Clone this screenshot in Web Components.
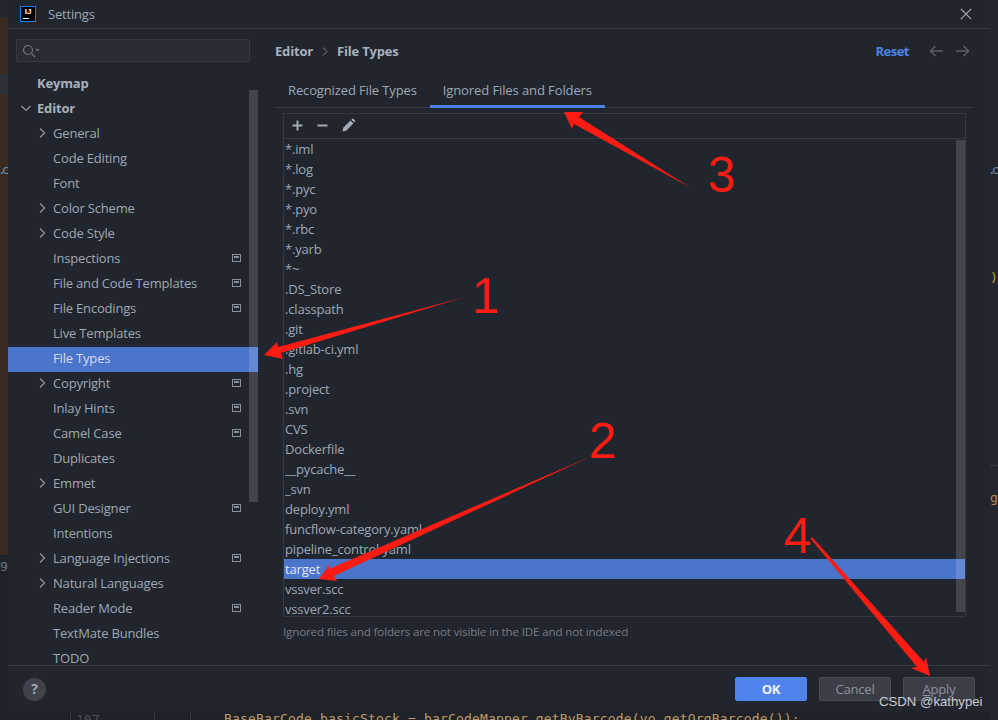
<!DOCTYPE html>
<html>
<head>
<meta charset="utf-8">
<title>Settings</title>
<style>
	html, body {
		margin: 0;
		height: 720px;
		overflow: hidden;
		background: #1f2229;
	}
	body {
		position: relative;
		font: 13px "Open Sans", "Noto Sans", sans-serif;
		color: #9fa8b5;
	}
</style>
</head>
<body>
<ide-backdrop></ide-backdrop>
<settings-dialog></settings-dialog>
<red-notes></red-notes>
<script>
class IdeBackdrop extends HTMLElement {
	constructor(){
		super();
		this.attachShadow({mode:"open"});
		this.shadowRoot.innerHTML = `
			<style>
				:host {
					display: block;
					position: absolute;
					inset: 0;
					background: #1f2229;
					overflow: hidden;
				}
				div, span { position: absolute; }
				#top { left: 0; top: 0; width: 8px; height: 17px; background: #23262d; }
				#brown { left: 0; top: 17px; width: 8px; height: 538px; background: #392b22; }
				#sel { left: 0; top: 74px; width: 8px; height: 21px; background: #2e3138; }
				#right { left: 990px; top: 0; width: 8px; height: 720px; background: #23262d; }
				#rule { left: 990px; top: 465px; width: 8px; height: 1px; background: #353840; }
				.mono { font: 13px/16px "DejaVu Sans Mono", monospace; white-space: pre; }
				.tight { letter-spacing: -4px; }
				#code { left: 224px; top: 711px; color: #c39a62; letter-spacing: .17px; }
				#num { left: 76px; top: 712px; color: #4a4e56; }
				.line { top: 712px; width: 1px; height: 8px; background: #353840; }
			</style>
			<div id="top"></div>
			<div id="brown"></div>
			<div id="sel"></div>
			<div id="right"></div>
			<div id="rule"></div>
			<span class="mono tight" style="left:-2px;top:162px;color:#6d8aa8">.c</span>
			<span class="mono" style="left:0;top:559px;color:#6f737a">9</span>
			<span class="mono tight" style="left:988px;top:162px;color:#6d8aa8">.c</span>
			<span class="mono" style="left:990px;top:270px;color:#c9a227">)</span>
			<span class="mono" style="left:990px;top:490px;color:#b98a5a">g</span>
			<div class="line" style="left:70px"></div>
			<div class="line" style="left:154px"></div>
			<div class="line" style="left:190px"></div>
			<span class="mono" id="num">107</span>
			<span class="mono" id="code">BaseBarCode basicStock = barCodeMapper.getByBarcode(vo.getOrgBarcode());</span>
		`;
	}
}
customElements.define("ide-backdrop",IdeBackdrop);

class TreeRow extends HTMLElement {
	constructor(){
		super();
		this.attachShadow({mode:"open"});
		this.shadowRoot.innerHTML = `
			<style>
				:host {
					display: flex;
					align-items: center;
					height: 25px;
					flex: none;
					padding-left: 45px;
					padding-bottom: 3px;
					box-sizing: border-box;
					position: relative;
					color: #9fa8b5;
					white-space: nowrap;
				}
				:host([level="0"]) {
					padding-left: 29px;
					font-weight: 700;
					color: #a9b1bd;
				}
				:host([selected]) {
					background: #4b74cb;
					color: #d5dcea;
				}
				#arrow {
					position: absolute;
					left: 29px;
					top: 6px;
					display: none;
				}
				:host([level="0"]) #arrow { left: 13px; }
				:host([arrow]) #arrow { display: block; }
				#badge {
					position: absolute;
					left: 224px;
					top: 7px;
					display: none;
				}
				:host([badge]) #badge { display: block; }
			</style>
			<svg id="arrow" width="10" height="10" viewBox="0 0 10 10" fill="none" stroke="#9298a2" stroke-width="1.2"></svg>
			<svg id="badge" width="9" height="8" viewBox="0 0 9 8"><rect x=".5" y=".5" width="8" height="7" fill="none" stroke="#8a9099"/><rect x="2" y="2" width="5" height="2" fill="#8a9099"/></svg>
			<slot></slot>
		`;
	}

	connectedCallback(){
		const arrow = this.shadowRoot.getElementById("arrow");
		if (this.getAttribute("arrow")=="down"){
			arrow.innerHTML = `<path d="M.5 3 L5 7.5 L9.5 3"/>`;
		}else{
			arrow.innerHTML = `<path d="M3 .5 L7.5 5 L3 9.5"/>`;
		}
	}
}
customElements.define("tree-row",TreeRow);

class SettingsTree extends HTMLElement {
	constructor(){
		super();
		this.attachShadow({mode:"open"});
		this.shadowRoot.innerHTML = `
			<style>
				:host {
					display: flex;
					flex-direction: column;
					width: 250px;
					flex: none;
					position: relative;
					overflow: hidden;
					box-sizing: border-box;
				}
				#search {
					margin: 10px 8px;
					height: 23px;
					flex: none;
					box-sizing: border-box;
					background: #292c35;
					border: 1px solid #373a43;
					border-radius: 2px;
					display: flex;
					align-items: center;
					padding-left: 5px;
				}
				#rows {
					display: flex;
					flex-direction: column;
				}
				#thumb {
					position: absolute;
					left: 241px;
					top: 61px;
					width: 9px;
					height: 412px;
					background: #ffffff26;
				}
			</style>
			<div id="search">
				<svg width="18" height="14" viewBox="0 0 18 14" fill="none" stroke="#6f747c" stroke-width="1.2">
					<circle cx="6" cy="6" r="4.5"/><path d="M9.5 9.5 L13 13"/><path d="M13.5 5 h4 l-2 2.5z" fill="#6f747c" stroke="none"/>
				</svg>
			</div>
			<div id="rows"><slot></slot></div>
			<div id="thumb"></div>
		`;
	}
}
customElements.define("settings-tree",SettingsTree);

class FileList extends HTMLElement {
	constructor(){
		super();
		this.attachShadow({mode:"open"});
		this.shadowRoot.innerHTML = `
			<style>
				:host {
					display: flex;
					flex-direction: column;
					height: 504px;
					margin: 5px 24px 0 25px;
					box-sizing: border-box;
					border: 1px solid #363942;
					position: relative;
					overflow: hidden;
				}
				#tools {
					height: 24px;
					flex: none;
					border-bottom: 1px solid #363942;
					display: flex;
					align-items: flex-start;
					gap: 12px;
					padding-left: 7px;
				}
				#tools svg { margin-top: 5px; }
				#tools svg:last-child { margin-top: 4px; }
				#items {
					display: flex;
					flex-direction: column;
				}
				#thumb {
					position: absolute;
					right: 0;
					top: 26px;
					width: 9px;
					bottom: 4px;
					background: #ffffff26;
				}
				::slotted(div) {
					height: 20px;
					line-height: 20px;
					padding-left: 1px;
					flex: none;
					white-space: nowrap;
				}
				::slotted(.on) {
					background: #4b74cb;
					color: #e1e6f0;
				}
			</style>
			<div id="tools">
				<svg width="13" height="13" viewBox="0 0 13 13" fill="#a5abb4"><path d="M5.5 1.5h2v4h4v2h-4v4h-2v-4h-4v-2h4z"/></svg>
				<svg width="13" height="13" viewBox="0 0 13 13" fill="#a5abb4"><path d="M1.5 5.5h10v2h-10z"/></svg>
				<svg width="15" height="15" viewBox="0 0 15 15" fill="#a5abb4"><path d="M1.5 13.5 L2.3 9.8 L9.5 2.6 L12.4 5.5 L5.2 12.7z"/><path d="M10.4 1.7 L11.4 .8 Q12 .4 12.6 .9 L14 2.4 Q14.5 3 14 3.6 L13.2 4.6z"/></svg>
			</div>
			<div id="items"><slot></slot></div>
			<div id="thumb"></div>
		`;
	}
}
customElements.define("file-list",FileList);

class DlgButton extends HTMLElement {
	constructor(){
		super();
		this.attachShadow({mode:"open"});
		this.shadowRoot.innerHTML = `
			<style>
				:host {
					display: flex;
					align-items: center;
					justify-content: center;
					width: 72px;
					height: 24px;
					box-sizing: border-box;
					border: 1px solid #494c55;
					border-radius: 2px;
					background: #3b3e47;
					color: #8c929c;
				}
				:host([primary]) {
					background: #5183ec;
					border-color: #5183ec;
					color: #eef2fb;
					font-weight: 700;
				}
			</style>
			<slot></slot>
		`;
	}
}
customElements.define("dlg-button",DlgButton);

class SettingsDialog extends HTMLElement {
	constructor(){
		super();
		this.attachShadow({mode:"open"});
		this.shadowRoot.innerHTML = `
			<style>
				:host {
					display: flex;
					flex-direction: column;
					position: absolute;
					left: 8px;
					top: 0;
					width: 982px;
					height: 712px;
					background: #21252d;
					color: #9fa8b5;
					font: 13px/18px "Open Sans", "Noto Sans", sans-serif;
					letter-spacing: -.18px;
				}
				#title {
					height: 29px;
					flex: none;
					box-sizing: border-box;
					border-bottom: 1px solid #363942;
					display: flex;
					align-items: center;
					padding: 0 18px 0 12px;
					gap: 12px;
				}
				#logo {
					width: 16px;
					height: 16px;
					box-sizing: border-box;
					border: 1px solid #1a7fe8;
					background: #000;
					color: #fff;
					font: 700 8px/9px "Liberation Sans", sans-serif;
					letter-spacing: 0;
					text-align: center;
					position: relative;
				}
				#logo i {
					position: absolute;
					left: 2px;
					bottom: 2px;
					width: 6px;
					height: 1px;
					background: #fff;
				}
				#caption { flex: 1; }
				#body {
					flex: 1;
					display: flex;
					min-height: 0;
				}
				#pane {
					flex: 1;
					display: flex;
					flex-direction: column;
					min-width: 0;
				}
				#crumbs {
					height: 45px;
					flex: none;
					box-sizing: border-box;
					padding: 1px 20px 2px 17px;
					display: flex;
					align-items: center;
					font-weight: 700;
					color: #a9b1bd;
				}
				#crumbs .sep { margin: 0 9px; }
				#crumbs .gap { flex: 1; }
				#reset { color: #4d84e6; margin-right: 20px; letter-spacing: -.5px; }
				#crumbs svg + svg { margin-left: 13px; }
				#tabs {
					height: 34px;
					flex: none;
					margin: 0 16px 0 17px;
					box-sizing: border-box;
					border-bottom: 1px solid #363942;
					display: flex;
					align-items: stretch;
				}
				.tab {
					padding: 0 13px 2px;
					display: flex;
					align-items: center;
					height: 33px;
					box-sizing: border-box;
					margin-bottom: -1px;
					letter-spacing: -.13px;
				}
				.tab.on {
					border-bottom: 3px solid #4f7fe0;
					height: 34px;
					padding-bottom: 0;
					letter-spacing: -.1px;
				}
				#note {
					margin: 6px 0 0 25px;
					color: #767b84;
					font-size: 11.65px;
				}
				#foot {
					height: 47px;
					flex: none;
					box-sizing: border-box;
					border-top: 1px solid #363942;
					display: flex;
					align-items: center;
					padding: 0 15px 0 15px;
					gap: 12px;
				}
				#help {
					width: 23px;
					height: 23px;
					border-radius: 50%;
					background: #40434b;
					color: #a2a6ad;
					font-weight: 700;
					font-size: 14px;
					display: flex;
					align-items: center;
					justify-content: center;
					margin-right: auto;
				}
			</style>
			<div id="title">
				<div id="logo">IJ<i></i></div>
				<span id="caption">Settings</span>
				<svg width="12" height="12" viewBox="0 0 12 12" stroke="#a9adb3" stroke-width="1.1" fill="none"><path d="M.8 .8 L11.2 11.2 M11.2 .8 L.8 11.2"/></svg>
			</div>
			<div id="body">
				<settings-tree id="tree"></settings-tree>
				<div id="pane">
					<div id="crumbs">
						<span>Editor</span>
						<svg class="sep" width="6" height="9" viewBox="0 0 6 9" fill="none" stroke="#80858e"><path d="M1 .5 L5 4.5 L1 8.5"/></svg>
						<span>File Types</span>
						<span class="gap"></span>
						<span id="reset">Reset</span>
						<svg width="14" height="12" viewBox="0 0 14 12" fill="none" stroke="#5a5e66" stroke-width="1.5"><path d="M14 6 H1.5 M6.5 1 L1.5 6 L6.5 11"/></svg>
						<svg width="14" height="12" viewBox="0 0 14 12" fill="none" stroke="#5a5e66" stroke-width="1.5"><path d="M0 6 H12.5 M7.5 1 L12.5 6 L7.5 11"/></svg>
					</div>
					<div id="tabs">
						<div class="tab">Recognized File Types</div>
						<div class="tab on">Ignored Files and Folders</div>
					</div>
					<file-list id="files"></file-list>
					<div id="note">Ignored files and folders are not visible in the IDE and not indexed</div>
				</div>
			</div>
			<div id="foot">
				<div id="help">?</div>
				<dlg-button primary>OK</dlg-button>
				<dlg-button>Cancel</dlg-button>
				<dlg-button><span><u>A</u>pply</span></dlg-button>
			</div>
		`;
		const rows = [
			["Keymap",0],["Editor",0,"down"],["General",1,"right"],["Code Editing",1],["Font",1],
			["Color Scheme",1,"right"],["Code Style",1,"right"],["Inspections",1,null,1],
			["File and Code Templates",1,null,1],["File Encodings",1,null,1],["Live Templates",1],
			["File Types",1,null,0,1],["Copyright",1,"right",1],["Inlay Hints",1,null,1],
			["Camel Case",1,null,1],["Duplicates",1],["Emmet",1,"right"],["GUI Designer",1,null,1],
			["Intentions",1],["Language Injections",1,"right",1],["Natural Languages",1,"right"],
			["Reader Mode",1,null,1],["TextMate Bundles",1],["TODO",1]
		];
		const tree = this.shadowRoot.getElementById("tree");
		for (const [label,level,arrow,badge,selected] of rows){
			const row = document.createElement("tree-row");
			row.setAttribute("level",level);
			if (arrow) row.setAttribute("arrow",arrow);
			if (badge) row.setAttribute("badge","");
			if (selected) row.setAttribute("selected","");
			row.textContent = label;
			tree.appendChild(row);
		}
		const names = ["*.iml","*.log","*.pyc","*.pyo","*.rbc","*.yarb","*~",".DS_Store",".classpath",".git",
			".gitlab-ci.yml",".hg",".project",".svn","CVS","Dockerfile","__pycache__","_svn","deploy.yml",
			"funcflow-category.yaml","pipeline_control.yaml","target","vssver.scc","vssver2.scc"];
		const files = this.shadowRoot.getElementById("files");
		for (const name of names){
			const item = document.createElement("div");
			item.textContent = name;
			if (name=="target") item.className = "on";
			files.appendChild(item);
		}
	}
}
customElements.define("settings-dialog",SettingsDialog);

class RedNotes extends HTMLElement {
	constructor(){
		super();
		this.attachShadow({mode:"open"});
		this.shadowRoot.innerHTML = `
			<style>
				:host {
					display: block;
					position: absolute;
					inset: 0;
					pointer-events: none;
				}
				svg { position: absolute; left: 0; top: 0; }
				span {
					position: absolute;
					color: #fb1c14;
					font: 50px/50px "Liberation Sans", sans-serif;
				}
				#mark {
					color: #c9ccd1;
					font: 13.2px/18px "Liberation Sans", sans-serif;
					left: 879px;
					top: 693px;
				}
			</style>
			<svg width="998" height="720" fill="#fb1c14">
				<polygon points="465,297 278,347 277,342 264,355 283,359 281,353"/>
				<polygon points="592,456 329,569 330,564 319,579 337,581 334,576"/>
				<polygon points="691,188 579,117 583,112 564,112 572,129 574,124"/>
				<polygon points="810,538 813,538 924,662 926,657 930,676 911,668 917,667"/>
			</svg>
			<span style="left:472px;top:271px">1</span>
			<span style="left:589px;top:416px">2</span>
			<span style="left:708px;top:150px">3</span>
			<span style="left:784px;top:511px">4</span>
			<span id="mark">CSDN @kathypei</span>
		`;
	}
}
customElements.define("red-notes",RedNotes);
</script>
</body>
</html>
